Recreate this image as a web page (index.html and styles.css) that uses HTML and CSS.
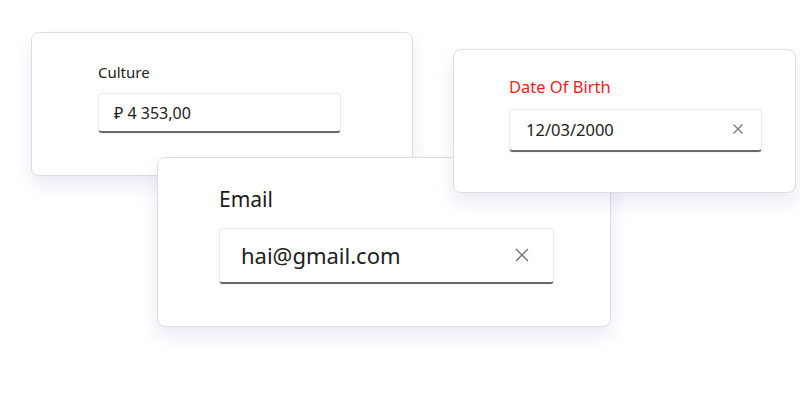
FILE: index.html
```html
<!DOCTYPE html>
<html lang="en">
  <head>
    <meta charset="UTF-8" />
    <meta name="viewport" content="width=device-width, initial-scale=1.0" />
    <title>Text Inputs</title>
    <link rel="stylesheet" href="styles.css">
  </head>
  <body>
    <div class="canvas">
      <div class="card card-culture">
        <label class="field-label" for="culture">Culture</label>
        <div class="field">
          <input id="culture" class="field-input" type="text" value="₽ 4 353,00" />
        </div>
      </div>

      <div class="card card-email">
        <label class="field-label" for="email">Email</label>
        <div class="field">
          <input id="email" class="field-input" type="text" value="hai@gmail.com" />
          <span class="clear-btn">
            <svg viewBox="0 0 14 14" width="14" height="14">
              <path d="M1 1 L13 13 M13 1 L1 13" stroke="#6b6b6b" stroke-width="1.3" fill="none" />
            </svg>
          </span>
        </div>
      </div>

      <div class="card card-date">
        <label class="field-label error" for="dob">Date Of Birth</label>
        <div class="field">
          <input id="dob" class="field-input" type="text" value="12/03/2000" />
          <span class="clear-btn">
            <svg viewBox="0 0 10 10" width="10" height="10">
              <path d="M0.5 0.5 L9.5 9.5 M9.5 0.5 L0.5 9.5" stroke="#707070" stroke-width="1.1" fill="none" />
            </svg>
          </span>
        </div>
      </div>
    </div>
  </body>
</html>
```

FILE: styles.css
```css
body {
  margin: 0;
  background: #ffffff;
  font-family: "Noto Sans", "Open Sans", sans-serif;
  color: #1b1b1b;
}

.canvas {
  position: relative;
  width: 800px;
  height: 420px;
  overflow: hidden;
}

.card {
  position: absolute;
  box-sizing: border-box;
  background: #ffffff;
  border: 1px solid #dedede;
  border-radius: 8px;
  box-shadow: 0 10px 18px rgba(110, 110, 190, 0.14);
  display: flex;
  flex-direction: column;
}

.card-culture {
  left: 31px;
  top: 32px;
  width: 382px;
  height: 144px;
  padding: 29px 0 0 66px;
  z-index: 1;
}

.card-email {
  left: 157px;
  top: 157px;
  width: 454px;
  height: 170px;
  padding: 27px 0 0 61px;
  z-index: 2;
}

.card-date {
  left: 453px;
  top: 49px;
  width: 343px;
  height: 144px;
  padding: 26px 0 0 55px;
  z-index: 3;
}

.field-label {
  display: block;
  font-size: 15px;
  line-height: 20px;
}

.field-label.error {
  color: #ff1a1a;
}

.field {
  position: relative;
  display: flex;
  align-items: center;
  box-sizing: border-box;
  background: #ffffff;
  border: 1px solid #ececec;
  border-bottom: 2px solid #6a6a6a;
  border-radius: 4px;
  box-shadow: 0 1px 2px rgba(0, 0, 0, 0.06);
}

.field-input {
  flex: 1;
  min-width: 0;
  border: none;
  outline: none;
  background: transparent;
  font-family: inherit;
  color: #212121;
  padding: 0;
}

.clear-btn {
  display: flex;
  align-items: center;
}

.card-culture .field-label {
  margin-bottom: 11px;
}

.card-culture .field {
  width: 243px;
  height: 40px;
  padding-left: 15px;
}

.card-culture .field-input {
  font-size: 16px;
}

.card-date .field-label {
  font-size: 16.5px;
  line-height: 22px;
  margin-bottom: 11px;
}

.card-date .field {
  width: 253px;
  height: 43px;
  padding: 0 18px 2px 16px;
}

.card-date .field-input {
  font-size: 16.5px;
}

.card-email .field-label {
  font-size: 21px;
  line-height: 28px;
  margin-bottom: 15px;
}

.card-email .field {
  width: 335px;
  height: 56px;
  padding: 0 24px 2px 21px;
}

.card-email .field-input {
  font-size: 22px;
}
```
